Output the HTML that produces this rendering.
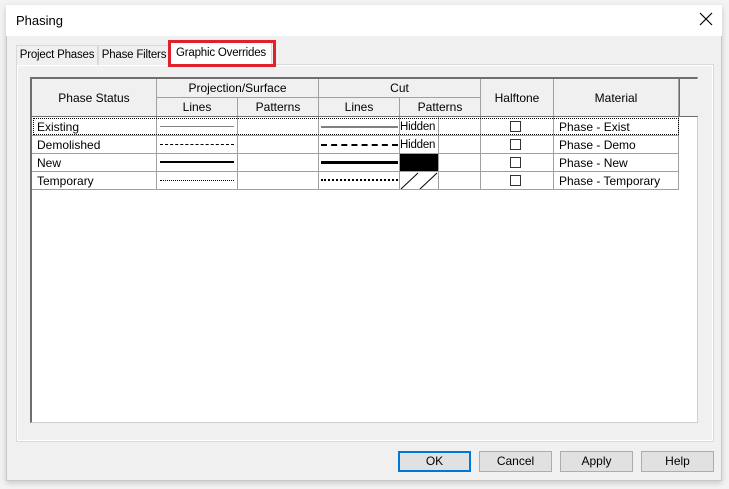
<!DOCTYPE html>
<html><head><style>
*{margin:0;padding:0;box-sizing:border-box}
body{width:729px;height:489px;background:#f3f3f3;font-family:"Liberation Sans",sans-serif;font-size:12px;color:#000;position:relative;overflow:hidden}
.a{position:absolute;white-space:nowrap}
.win{left:6px;top:5px;width:716px;height:476px;background:#f0f0f0;border:1px solid #c8c8c8;box-shadow:0 2px 6px rgba(0,0,0,.18)}
.title{left:6px;top:5px;width:716px;height:31px;background:#fff}
.tab{top:45px;height:20px;border:1px solid #d9d9d9;border-bottom:none;background:#f0f0f0;text-align:center;line-height:18px;font-size:11.5px;letter-spacing:-0.2px}
.hc{background:#f0f0f0;border-right:1px solid #a0a0a0;border-bottom:1px solid #a0a0a0;text-align:center;line-height:19px}
.v{background:#a0a0a0;width:1px}
.h{background:#a0a0a0;height:1px}
.btn{top:451px;width:73px;height:21px;border:1px solid #adadad;background:#e1e1e1;text-align:center;line-height:19px}
.cb{width:11px;height:11px;border:1px solid #333;background:#fff}
.txt{line-height:18px}
</style></head><body>
<div class="a win"></div>
<div class="a title"></div>
<div class="a" style="left:16px;top:13px;font-size:13px">Phasing</div>
<div class="a" style="left:699px;top:12px;font-size:15px;">
<svg width="14" height="14"><path d="M1 1L13 13M13 1L1 13" stroke="#000" stroke-width="1.2"/></svg></div>

<div class="a" style="left:16px;top:64px;width:698px;height:378px;border:1px solid #d9d9d9;background:#f0f0f0;box-shadow:inset 0 0 0 1px #fff"></div>
<div class="a tab" style="left:16px;width:82px">Project Phases</div>
<div class="a tab" style="left:98px;width:72px">Phase Filters</div>
<div class="a tab" style="left:170px;top:42px;width:102px;height:24px;background:#fff;line-height:20px">Graphic Overrides</div>
<div class="a" style="left:168px;top:40px;width:108px;height:27px;border:3px solid #e0202a"></div>

<!-- grid -->
<div class="a" style="left:30px;top:77px;width:668px;height:346px;background:#fff;border-left:2px solid #6e6e6e;border-top:2px solid #6e6e6e;border-right:1px solid #d0d0d0;border-bottom:1px solid #d0d0d0"></div>
<div class="a" style="left:32px;top:79px;width:666px;height:38px;background:#f0f0f0;border-bottom:1px solid #6e6e6e"></div>
<div class="a hc" style="left:32px;top:79px;width:125px;height:38px;line-height:38px">Phase Status</div>
<div class="a hc" style="left:157px;top:79px;width:162px;height:19px">Projection/Surface</div>
<div class="a hc" style="left:157px;top:98px;width:81px;height:19px">Lines</div>
<div class="a hc" style="left:238px;top:98px;width:81px;height:19px">Patterns</div>
<div class="a hc" style="left:319px;top:79px;width:162px;height:19px">Cut</div>
<div class="a hc" style="left:319px;top:98px;width:81px;height:19px">Lines</div>
<div class="a hc" style="left:400px;top:98px;width:81px;height:19px">Patterns</div>
<div class="a hc" style="left:481px;top:79px;width:73px;height:38px;line-height:38px">Halftone</div>
<div class="a hc" style="left:554px;top:79px;width:125px;height:38px;line-height:38px">Material</div>
<div class="a" style="left:679px;top:79px;width:1px;height:38px;background:#6e6e6e"></div>
<div class="a" style="left:32px;top:116px;width:666px;height:1px;background:#6e6e6e"></div>

<div class="a h" style="left:32px;top:135px;width:647px"></div>
<div class="a h" style="left:32px;top:153px;width:647px"></div>
<div class="a h" style="left:32px;top:171px;width:647px"></div>
<div class="a h" style="left:32px;top:189px;width:647px"></div>
<div class="a v" style="left:156px;top:117px;height:73px"></div>
<div class="a v" style="left:237px;top:117px;height:73px"></div>
<div class="a v" style="left:318px;top:117px;height:73px"></div>
<div class="a v" style="left:399px;top:117px;height:73px"></div>
<div class="a v" style="left:438px;top:117px;height:73px"></div>
<div class="a v" style="left:480px;top:117px;height:73px"></div>
<div class="a v" style="left:553px;top:117px;height:73px"></div>
<div class="a v" style="left:678px;top:117px;height:73px"></div>
<div class="a" style="left:33px;top:118px;width:646px;height:17px;border:1px dotted #000"></div>

<div class="a txt" style="left:37px;top:118px">Existing</div>
<div class="a txt" style="left:37px;top:136px">Demolished</div>
<div class="a txt" style="left:37px;top:154px">New</div>
<div class="a txt" style="left:37px;top:172px">Temporary</div>

<div class="a" style="left:160px;top:126px;width:74px;height:1px;background:#808080"></div>
<div class="a" style="left:160px;top:144px;width:74px;border-top:1px dashed #000"></div>
<div class="a" style="left:160px;top:161px;width:74px;height:2px;background:#000"></div>
<div class="a" style="left:160px;top:180px;width:74px;border-top:1px dotted #000"></div>
<div class="a" style="left:321px;top:126px;width:77px;height:2px;background:#808080"></div>
<div class="a" style="left:321px;top:144px;width:77px;border-top:2px dashed #000"></div>
<div class="a" style="left:321px;top:161px;width:77px;height:3px;background:#000"></div>
<div class="a" style="left:321px;top:179px;width:77px;border-top:2px dotted #000"></div>
<div class="a txt" style="left:400px;top:118px;font-size:11.5px;letter-spacing:-0.2px">Hidden</div>
<div class="a txt" style="left:400px;top:136px;font-size:11.5px;letter-spacing:-0.2px">Hidden</div>
<div class="a" style="left:400px;top:154px;width:38px;height:17px;background:#000"></div>
<svg class="a" style="left:400px;top:172px" width="38" height="17"><path d="M1 17L18 1M20 17L37 1" stroke="#000" stroke-width="1"/></svg>

<div class="a cb" style="left:510px;top:121px"></div>
<div class="a cb" style="left:510px;top:139px"></div>
<div class="a cb" style="left:510px;top:157px"></div>
<div class="a cb" style="left:510px;top:175px"></div>
<div class="a txt" style="left:559px;top:118px">Phase - Exist</div>
<div class="a txt" style="left:559px;top:136px">Phase - Demo</div>
<div class="a txt" style="left:559px;top:154px">Phase - New</div>
<div class="a txt" style="left:559px;top:172px">Phase - Temporary</div>

<div class="a btn" style="left:398px;border:2px solid #0078d7;line-height:17px">OK</div>
<div class="a btn" style="left:479px">Cancel</div>
<div class="a btn" style="left:560px">Apply</div>
<div class="a btn" style="left:641px">Help</div>
</body></html>
